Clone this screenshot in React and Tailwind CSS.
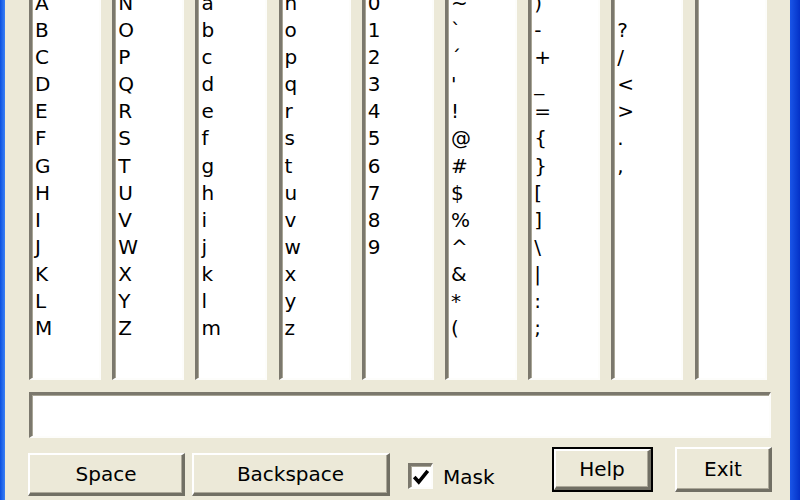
import React, { useState } from "react";

const columns = [
  ["A", "B", "C", "D", "E", "F", "G", "H", "I", "J", "K", "L", "M"],
  ["N", "O", "P", "Q", "R", "S", "T", "U", "V", "W", "X", "Y", "Z"],
  ["a", "b", "c", "d", "e", "f", "g", "h", "i", "j", "k", "l", "m"],
  ["n", "o", "p", "q", "r", "s", "t", "u", "v", "w", "x", "y", "z"],
  ["0", "1", "2", "3", "4", "5", "6", "7", "8", "9"],
  ["~", "`", "´", "'", "!", "@", "#", "$", "%", "^", "&", "*", "("],
  [")", "-", "+", "_", "=", "{", "}", "[", "]", "\\", "|", ":", ";"],
  ["", "?", "/", "<", ">", ".", ","],
  [],
];

const sunken =
  "bg-white border-l-[3px] border-t-[3px] border-l-[#7b786d] border-t-[#7b786d] border-r-2 border-b-2 border-r-[#fdfdfb] border-b-[#fdfdfb] shadow-[inset_1px_1px_0_#a9a697]";

const raised =
  "bg-[#ece9d8] border-l-2 border-t-2 border-l-white border-t-white border-r-[3px] border-b-[3px] border-r-[#716f64] border-b-[#716f64] shadow-[inset_-1px_-1px_0_#aca899] text-[20px] text-black flex items-center justify-center";

const ListBox = ({ items, onPick }) => (
  <div className={`${sunken} w-[72px] h-[396px] pl-[3px] pt-[3px] overflow-hidden`}>
    {items.map((c, i) => (
      <div key={i} onClick={() => onPick(c)} className="leading-[27.1px] h-[27.1px] text-[20px] text-black whitespace-pre">
        {c}
      </div>
    ))}
  </div>
);

const App = () => {
  const [text, setText] = useState("");
  const [mask, setMask] = useState(true);

  const pick = (c) => {
    if (c) setText(text + c);
  };

  return (
    <div className="w-[800px] h-[500px] overflow-hidden flex bg-[#ece9d8]" style={{ fontFamily: '"DejaVu Sans", Verdana, sans-serif' }}>
      <div className="w-[5px] h-full bg-gradient-to-r from-[#0a4fe0] to-[#3a80f5]" />

      <div className="flex-1 flex flex-col">
        <div className="-mt-[16px] pl-[24px] flex gap-[11.2px]">
          {columns.map((col, i) => (
            <ListBox key={i} items={col} onPick={pick} />
          ))}
        </div>

        <div className={`${sunken} mt-[12px] ml-[24px] w-[742px] h-[46px] px-2 flex items-center text-[20px] text-black`}>
          {mask ? "*".repeat(text.length) : text}
        </div>

        <div className="mt-[9px] pl-[23px] flex items-start">
          <button onClick={() => setText(text + " ")} className={`${raised} mt-[6px] w-[157px] h-[43px]`}>
            Space
          </button>
          <button onClick={() => setText(text.slice(0, -1))} className={`${raised} mt-[6px] ml-[7px] w-[198px] h-[43px]`}>
            Backspace
          </button>
          <button
            onClick={() => setMask(!mask)}
            className={`${sunken} mt-[16px] ml-[18px] w-[25px] h-[26px] flex items-center justify-center`}
          >
            {mask && (
              <svg width="18" height="18" viewBox="0 0 16 16">
                <polyline points="2,8 6,12.5 14,2.5" fill="none" stroke="#000" strokeWidth="3.2" />
              </svg>
            )}
          </button>
          <span className="mt-[17px] ml-[10px] w-[109px] text-[20px] leading-[26px] text-black">Mask</span>
          <div className="w-[101px] h-[45px] border-2 border-black">
            <button className={`${raised} w-full h-full`}>Help</button>
          </div>
          <button className={`${raised} ml-[22px] w-[97px] h-[45px]`}>Exit</button>
        </div>
      </div>

      <div className="w-[10px] h-full bg-gradient-to-r from-[#1a55e8] to-[#0531c8]" />
    </div>
  );
};

export default App;
